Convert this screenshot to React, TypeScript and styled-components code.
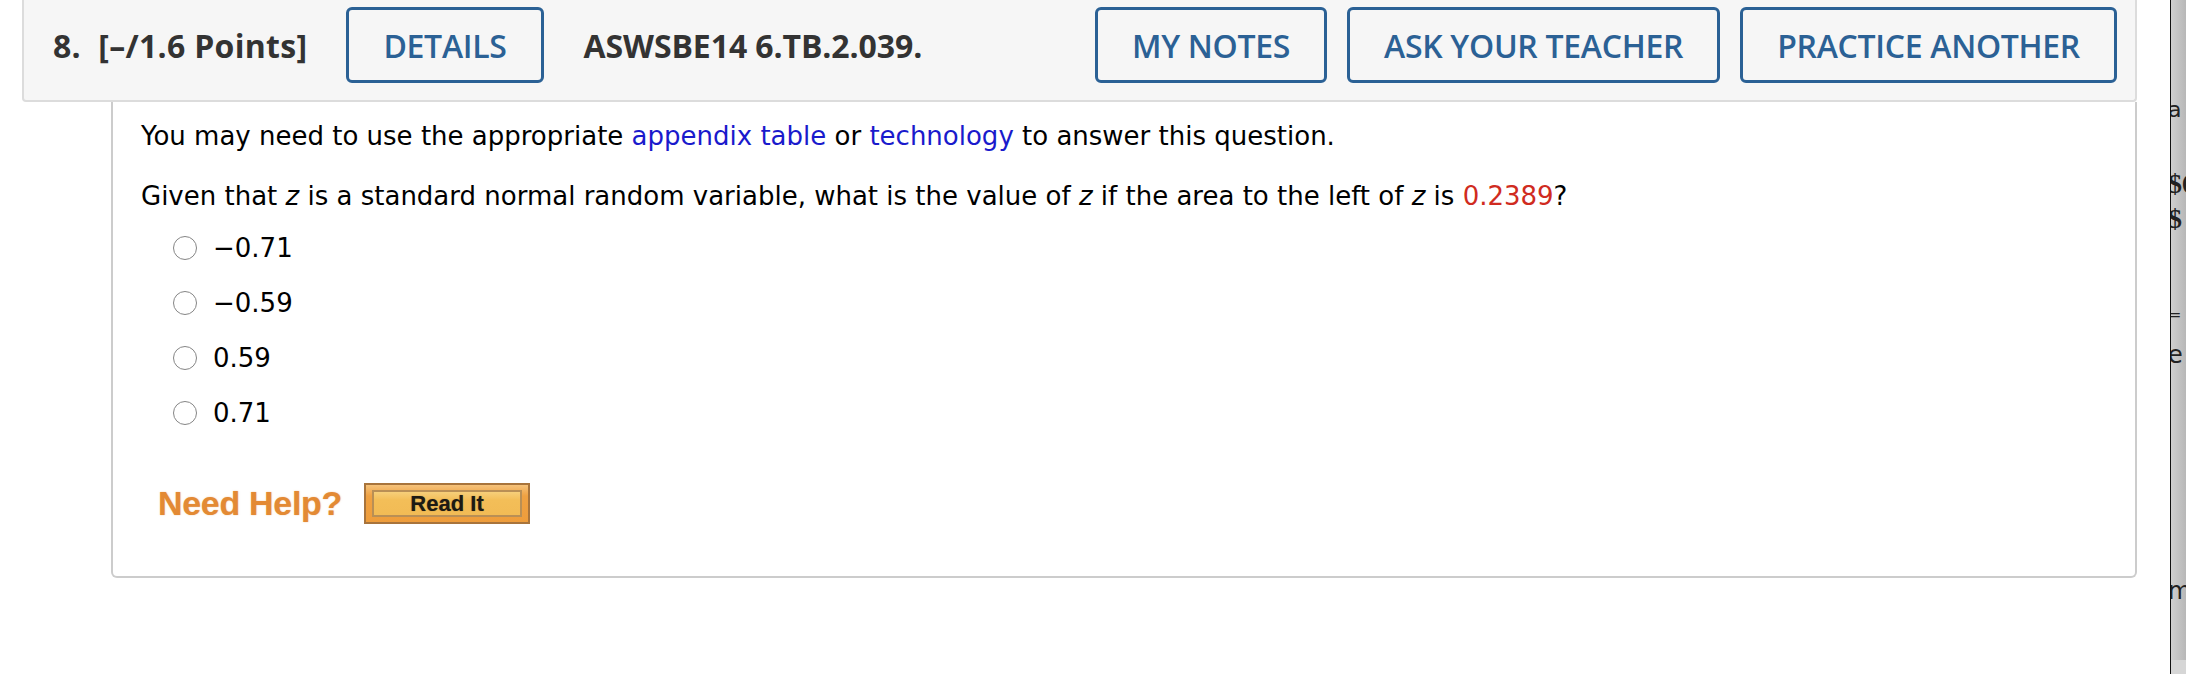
import React from "react";
import styled, { createGlobalStyle } from "styled-components";

const GlobalStyle = createGlobalStyle`
  html, body { margin: 0; padding: 0; background: #ffffff; }
  body { width: 2186px; height: 674px; overflow: hidden; }
  * { box-sizing: border-box; }
`;

const Page = styled.div`
  display: flex;
  width: 2186px;
  height: 674px;
`;

const Main = styled.div`
  flex: 1;
  display: flex;
  flex-direction: column;
  padding: 0 33px 0 22px;
`;

const Header = styled.div`
  display: flex;
  align-items: center;
  height: 102px;
  padding: 6px 18px 16px 29px;
  background: #f6f6f6;
  border: 2px solid #dcdcdc;
  border-top: none;
  border-radius: 0 0 4px 4px;
  font-family: "Open Sans", "Noto Sans", sans-serif;
`;

const Title = styled.div`
  font-size: 32px;
  font-weight: 700;
  color: #333333;
  white-space: pre;
  letter-spacing: 0.3px;
`;

const Code = styled.div`
  margin-left: 40px;
  font-size: 32px;
  font-weight: 700;
  color: #333333;
  letter-spacing: -0.1px;
`;

const Spacer = styled.div`
  flex: 1;
`;

const ButtonGroup = styled.div`
  display: flex;
  gap: 20px;
`;

const OutlineButton = styled.button<{ $ml?: number }>`
  height: 76px;
  margin-left: ${(p) => p.$ml ?? 0}px;
  padding: 0 34px;
  border: 3px solid #2b6195;
  border-radius: 6px;
  background: #f6f6f6;
  color: #2b6195;
  font-family: "Open Sans", "Noto Sans", sans-serif;
  font-size: 32px;
  font-weight: 600;
  letter-spacing: -0.3px;
  cursor: pointer;
`;

const Content = styled.div`
  margin-left: 89px;
  height: 476px;
  border: 2px solid #cccccc;
  border-top: none;
  border-radius: 0 0 6px 6px;
  padding: 18px 28px 0 28px;
  font-family: "DejaVu Sans", Verdana, sans-serif;
  font-size: 26px;
  color: #000000;
`;

const Para = styled.p<{ $mt?: number }>`
  margin: ${(p) => p.$mt ?? 0}px 0 0 0;
  line-height: 32px;
`;

const Link = styled.span`
  color: #1a1acc;
`;

const Red = styled.span`
  color: #d02b20;
`;

const Var = styled.i`
  font-style: italic;
`;

const Options = styled.div`
  display: flex;
  flex-direction: column;
  gap: 23px;
  margin-top: 20px;
  padding-left: 32px;
`;

const Option = styled.label`
  display: flex;
  align-items: center;
  gap: 16px;
  height: 32px;
`;

const Radio = styled.span`
  width: 24px;
  height: 24px;
  border-radius: 50%;
  border: 1.5px solid #858585;
  background: #ffffff;
  flex: none;
`;

const HelpRow = styled.div`
  display: flex;
  align-items: center;
  gap: 22px;
  margin-top: 54px;
  padding-left: 17px;
`;

const NeedHelp = styled.span`
  font-family: "Liberation Sans", Arial, sans-serif;
  font-weight: 700;
  font-size: 34px;
  color: #e38a34;
  text-shadow: 0 0 1.5px rgba(227, 138, 52, 0.55);
  letter-spacing: -0.3px;
`;

const ReadItOuter = styled.div`
  width: 166px;
  height: 41px;
  padding: 5px 6px;
  border: 2px solid #a8743c;
  background: linear-gradient(#f5c27a 0%, #efa142 30%, #ee9d3c 100%);
`;

const ReadItInner = styled.div`
  height: 100%;
  display: flex;
  align-items: center;
  justify-content: center;
  border: 2px solid #b98f55;
  background: linear-gradient(#f6cf7a 0%, #f3be58 35%, #f2bb55 100%);
  font-family: "Liberation Sans", Arial, sans-serif;
  font-weight: 700;
  font-size: 22px;
  color: #1c1a14;
  text-shadow: 0 0 1px rgba(0, 0, 0, 0.45);
`;

const SideStrip = styled.div`
  width: 16px;
  height: 674px;
  flex: none;
  overflow: hidden;
  border-left: 1px solid #111111;
  background: linear-gradient(to right, #cfcfcf, #b7b7b7);
  display: flex;
  flex-direction: column;
  font-family: "DejaVu Sans", sans-serif;
  color: #222222;
`;

const StripText = styled.span<{ $mt: number; $serif?: boolean; $size?: number }>`
  margin-top: ${(p) => p.$mt}px;
  margin-left: -3px;
  font-family: ${(p) => (p.$serif ? '"Liberation Serif", serif' : '"DejaVu Sans", sans-serif')};
  font-size: ${(p) => p.$size ?? 22}px;
  font-weight: ${(p) => (p.$serif ? 700 : 400)};
  line-height: 1;
  height: ${(p) => p.$size ?? 22}px;
  white-space: nowrap;
`;

const StripFoot = styled.div`
  margin-top: auto;
  height: 14px;
  background: #d6d6d6;
`;

const options = ["\u22120.71", "\u22120.59", "0.59", "0.71"];

export default function App() {
  return (
    <>
      <GlobalStyle />
      <Page>
        <Main>
          <Header>
            <Title>{"8.  [\u2013/1.6 Points]"}</Title>
            <OutlineButton $ml={39}>DETAILS</OutlineButton>
            <Code>ASWSBE14 6.TB.2.039.</Code>
            <Spacer />
            <ButtonGroup>
              <OutlineButton>MY NOTES</OutlineButton>
              <OutlineButton>ASK YOUR TEACHER</OutlineButton>
              <OutlineButton>PRACTICE ANOTHER</OutlineButton>
            </ButtonGroup>
          </Header>
          <Content>
            <Para>
              You may need to use the appropriate <Link>appendix table</Link> or{" "}
              <Link>technology</Link> to answer this question.
            </Para>
            <Para $mt={28}>
              Given that <Var>z</Var> is a standard normal random variable, what is the value of{" "}
              <Var>z</Var> if the area to the left of <Var>z</Var> is <Red>0.2389</Red>?
            </Para>
            <Options>
              {options.map((o) => (
                <Option key={o}>
                  <Radio />
                  <span>{o}</span>
                </Option>
              ))}
            </Options>
            <HelpRow>
              <NeedHelp>Need Help?</NeedHelp>
              <ReadItOuter>
                <ReadItInner>Read It</ReadItInner>
              </ReadItOuter>
            </HelpRow>
          </Content>
        </Main>
        <SideStrip>
          <StripText $mt={99}>a</StripText>
          <StripText $mt={49} $serif $size={28}>$6</StripText>
          <StripText $mt={7} $serif $size={28}>$</StripText>
          <StripText $mt={74} $size={16}>=</StripText>
          <StripText $mt={20} $size={24}>e</StripText>
          <StripText $mt={212} $size={24}>m</StripText>
          <StripFoot />
        </SideStrip>
      </Page>
    </>
  );
}
